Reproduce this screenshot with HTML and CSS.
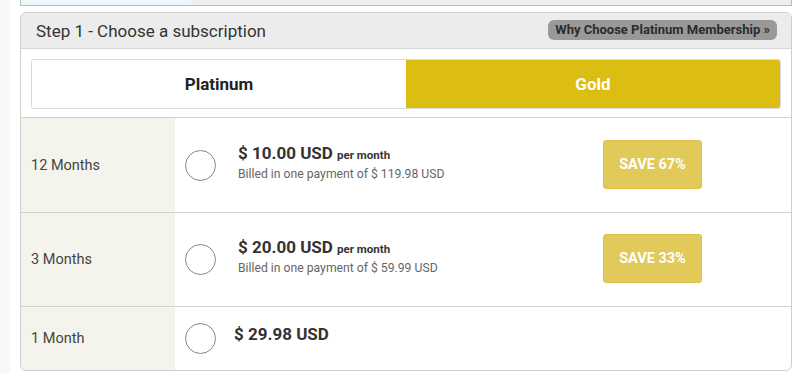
FILE: index.html
```html
<!DOCTYPE html>
<html lang="en">
<head>
  <meta charset="UTF-8" />
  <meta name="viewport" content="width=device-width, initial-scale=1.0"/>
  <title>Choose a subscription</title>
  <link rel="stylesheet" href="styles.css">
</head>
<body>
  <div class="page">
    <div class="prev-box">
      <div class="prev-left"></div>
      <div class="prev-right"></div>
    </div>

    <div class="card">
      <div class="card-head">
        <h2>Step 1 - Choose a subscription</h2>
        <a class="why-btn" href="#">Why Choose Platinum Membership &raquo;</a>
      </div>

      <div class="tabs-wrap">
        <div class="tabs">
          <button class="tab">Platinum</button>
          <button class="tab active">Gold</button>
        </div>
      </div>

      <div class="plan">
        <div class="plan-label">12 Months</div>
        <div class="plan-body">
          <span class="radio"></span>
          <div class="price">
            <div class="amount">$ 10.00 USD <small>per month</small></div>
            <div class="billed">Billed in one payment of $ 119.98 USD</div>
          </div>
          <span class="save">SAVE 67%</span>
        </div>
      </div>

      <div class="plan second">
        <div class="plan-label">3 Months</div>
        <div class="plan-body">
          <span class="radio"></span>
          <div class="price">
            <div class="amount">$ 20.00 USD <small>per month</small></div>
            <div class="billed">Billed in one payment of $ 59.99 USD</div>
          </div>
          <span class="save">SAVE 33%</span>
        </div>
      </div>

      <div class="plan last">
        <div class="plan-label">1 Month</div>
        <div class="plan-body">
          <span class="radio"></span>
          <div class="price single">
            <div class="amount">$ 29.98 USD</div>
          </div>
        </div>
      </div>
    </div>
  </div>
</body>
</html>
```

FILE: styles.css
```css
body { margin: 0; background: #f7f7f7; font-family: Roboto, "Liberation Sans", Arial, sans-serif; color: #333; }
.page { margin-left: 10px; background: white; padding: 0 8px 0 10px; height: 373px; overflow: hidden; }

.prev-box { display: flex; height: 5px; border: 1px solid #bbb; border-top: none; }
.prev-left { width: 170px; background: #eef7fb; }
.prev-right { flex: 1; background: #efefef; }

.card { margin-top: 6px; border: 1px solid #cfcfcf; border-radius: 6px; overflow: hidden; }
.card-head {
  display: flex;
  align-items: center;
  justify-content: space-between;
  height: 35px;
  padding: 0 14px 0 15px;
  background: #ececec;
  border-bottom: 1px solid #d6d6d6;
}
.card-head h2 { margin: 0; font-size: 17px; font-weight: 400; color: #333; }
.why-btn {
  background: #999;
  color: #2c2c2c;
  font-size: 13px;
  font-weight: 700;
  text-decoration: none;
  padding: 2px 7px 3px;
  border-radius: 6px;
  margin-top: -2px;
}

.tabs-wrap { padding: 10px 10px 8px; border-bottom: 1px solid #d2d2d2; }
.tabs { display: flex; height: 48px; border: 1px solid #dadada; border-radius: 3px; overflow: hidden; }
.tab {
  flex: 1;
  border: none;
  background: white;
  font-family: inherit;
  font-size: 17px;
  font-weight: 700;
  color: #222;
  cursor: pointer;
}
.tab.active { background: #dcbd12; color: white; }

.plan { display: flex; height: 94px; border-bottom: 1px solid #d2d2d2; }
.plan.second { height: 93px; }
.plan.last { height: 63px; border-bottom: none; }
.plan-label { width: 144px; padding-left: 10px; background: #f5f4ec; display: flex; align-items: center; font-size: 14.5px; color: #444; }
.plan-body { flex: 1; display: flex; align-items: center; padding-left: 10px; }
.radio { width: 31px; height: 31px; border: 1.5px solid #888; border-radius: 50%; box-sizing: border-box; }
.price { width: 365px; margin-left: 22px; margin-top: -7px; }
.price.single { margin-left: 18px; margin-top: -10px; }
.amount { font-size: 17px; font-weight: 700; color: #333; }
.amount small { font-size: 11.5px; }
.billed { font-size: 12.2px; color: #666; margin-top: 4px; }
.save {
  width: 97px;
  height: 47px;
  display: flex;
  align-items: center;
  justify-content: center;
  background: #e1c95a;
  border: 1px solid #dcc24a;
  border-radius: 3px;
  color: white;
  font-size: 14.5px;
  font-weight: 700;
  margin-top: -2px;
}
```
